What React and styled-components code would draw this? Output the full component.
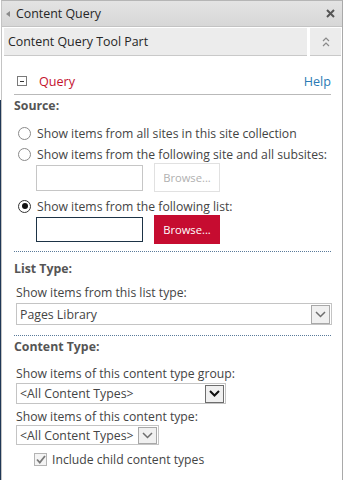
import React from "react";
import styled, { createGlobalStyle } from "styled-components";

const Global = createGlobalStyle`
  html, body { margin: 0; padding: 0; background: #fff; }
  body { font-family: "Open Sans", "Noto Sans", sans-serif; color: #444; }
  * { box-sizing: border-box; }
`;

const Page = styled.div`
  position: relative;
  width: 346px;
  height: 480px;
  overflow: hidden;
  background: #fff;
  white-space: nowrap;
  &::before {
    content: "";
    position: absolute;
    left: 0;
    top: 100px;
    bottom: 0;
    width: 1px;
    background: #1f3856;
  }
`;

const Panel = styled.div`
  margin-left: 1px;
  width: 342px;
  height: 480px;
  border-left: 1px solid #c4c4c4;
  border-right: 1px solid #a9a9a9;
  border-top: 1px solid #b5b5b5;
`;

const Header = styled.div`
  height: 26px;
  display: flex;
  align-items: center;
  padding: 0 7px 0 4px;
  background: linear-gradient(#e3e3e3, #d7d7d7);
  border-bottom: 1px solid #c3c3c3;
`;

const LeftTri = styled.span`
  width: 0;
  height: 0;
  border-top: 3.5px solid transparent;
  border-bottom: 3.5px solid transparent;
  border-right: 4px solid #8a8a8a;
  margin-right: 6px;
`;

const HeaderTitle = styled.span`
  flex: 1;
  font-size: 12.4px;
  color: #262626;
`;

const ToolRow = styled.div`
  display: flex;
  gap: 3px;
  margin-top: 1px;
  padding: 0 1px 0 2px;
`;

const ToolBar = styled.div`
  flex: 1;
  height: 28px;
  display: flex;
  align-items: center;
  padding-left: 4px;
  background: #ececec;
  border-bottom: 1px solid #c9c9c9;
  font-size: 12.4px;
  color: #262626;
`;

const ToolToggle = styled.div`
  width: 31px;
  height: 28px;
  display: flex;
  align-items: center;
  justify-content: center;
  background: #ececec;
  border-bottom: 1px solid #c9c9c9;
`;

const Body = styled.div`
  padding: 0 11px 0 12px;
`;

const QueryHead = styled.div`
  height: 25px;
  margin-top: 14px;
  display: flex;
  align-items: center;
  border-bottom: 1px solid #b9b9b9;
  padding: 0 0 2px 3px;
`;

const MinusBox = styled.span`
  width: 10px;
  height: 10px;
  border: 1px solid #7a7a7a;
  position: relative;
  margin-right: 12px;
  &::after {
    content: "";
    position: absolute;
    left: 2px;
    right: 2px;
    top: 3.5px;
    height: 1px;
    background: #333;
  }
`;

const QueryTitle = styled.span`
  flex: 1;
  font-size: 12.6px;
  color: #c4122f;
`;

const HelpLink = styled.span`
  font-size: 12.6px;
  color: #2a7ab5;
`;

const SectionTitle = styled.div`
  height: 20px;
  line-height: 20px;
  margin-top: ${(p) => p.$mt || 0}px;
  font-size: 12.3px;
  font-weight: 700;
  color: #555;
`;

const RadioRow = styled.label`
  display: flex;
  align-items: center;
  height: 18px;
  margin-top: ${(p) => p.$mt || 0}px;
  padding-left: 4px;
  font-size: 12.2px;
  color: #444;
`;

const Radio = styled.span`
  width: 13px;
  height: 13px;
  border-radius: 50%;
  border: 1px solid ${(p) => (p.$checked ? "#333" : "#8a8a8a")};
  background: #fff;
  margin-right: 6px;
  display: flex;
  align-items: center;
  justify-content: center;
  flex-shrink: 0;
  &::after {
    content: "";
    width: 6px;
    height: 6px;
    border-radius: 50%;
    background: #111;
    display: ${(p) => (p.$checked ? "block" : "none")};
  }
`;

const InputRow = styled.div`
  display: flex;
  align-items: center;
  gap: 11px;
  height: 29px;
  padding-left: 22px;
`;

const TextBox = styled.div`
  width: 107px;
  height: ${(p) => (p.$active ? 25 : 26)}px;
  border: 1px solid ${(p) => (p.$active ? "#1d3346" : "#c6c6c6")};
  background: #fff;
`;

const Button = styled.div`
  width: 66px;
  height: 29px;
  display: flex;
  align-items: center;
  justify-content: center;
  font-size: 11.2px;
  ${(p) =>
    p.$primary
      ? `background: #c60c30; color: #fff; border: 1px solid #c60c30;`
      : `background: #fff; color: #b0b0b0; border: 1px solid #e1e1e1;`}
`;

const Dotted = styled.div`
  margin-top: ${(p) => p.$mt || 0}px;
  border-top: 1px dotted #5a7a9a;
`;

const FieldLabel = styled.div`
  height: 16px;
  line-height: 16px;
  margin-top: ${(p) => p.$mt || 0}px;
  padding-left: 2px;
  font-size: 12.2px;
  color: #444;
`;

const Select = styled.div`
  width: ${(p) => p.$w}px;
  height: ${(p) => p.$h || 21}px;
  margin-top: ${(p) => p.$mt || 0}px;
  margin-left: 2px;
  border: 1px solid #c4c4c4;
  display: flex;
  align-items: center;
  justify-content: space-between;
  padding: 0 1px 0 3px;
  font-size: 12.3px;
  color: #444;
  background: #fff;
`;

const Arrow = styled.span`
  width: 19px;
  height: ${(p) => p.$h || 19}px;
  border: 1px solid ${(p) => (p.$dark ? "#6d6d6d" : "#a8a8a8")};
  background: #f0f0f0;
  display: flex;
  align-items: center;
  justify-content: center;
`;

const CheckRow = styled.div`
  display: flex;
  align-items: center;
  height: 16px;
  margin-top: ${(p) => p.$mt || 0}px;
  padding-left: 20px;
  font-size: 12.2px;
  color: #444;
`;

const CheckBox = styled.span`
  width: 13px;
  height: 13px;
  border: 1px solid #b4b4b4;
  background: #f4f4f4;
  margin-right: 5px;
  display: flex;
  align-items: center;
  justify-content: center;
`;

const Chevron = ({ dark }) => (
  <svg width="11" height="7" viewBox="0 0 11 7">
    <path d="M1 1 L5.5 5.5 L10 1" fill="none" stroke={dark ? "#111" : "#6e6e6e"} strokeWidth={dark ? 2 : 1.5} />
  </svg>
);

export default function App() {
  return (
    <Page>
      <Global />
      <Panel>
        <Header>
          <LeftTri />
          <HeaderTitle>Content Query</HeaderTitle>
          <svg width="9" height="9" viewBox="0 0 9 9">
            <path d="M1 1 L8 8 M8 1 L1 8" stroke="#555" strokeWidth="2" />
          </svg>
        </Header>
        <ToolRow>
          <ToolBar>Content Query Tool Part</ToolBar>
          <ToolToggle>
            <svg width="8" height="10" viewBox="0 0 8 10">
              <path d="M1 4 L4 1 L7 4 M1 9 L4 6 L7 9" fill="none" stroke="#8a8a8a" strokeWidth="1.2" />
            </svg>
          </ToolToggle>
        </ToolRow>
        <Body>
          <QueryHead>
            <MinusBox />
            <QueryTitle>Query</QueryTitle>
            <HelpLink>Help</HelpLink>
          </QueryHead>
          <SectionTitle $mt={1}>Source:</SectionTitle>
          <RadioRow $mt={8}>
            <Radio />
            Show items from all sites in this site collection
          </RadioRow>
          <RadioRow $mt={3}>
            <Radio />
            Show items from the following site and all subsites:
          </RadioRow>
          <InputRow>
            <TextBox />
            <Button>Browse...</Button>
          </InputRow>
          <RadioRow $mt={5}>
            <Radio $checked />
            Show items from the following list:
          </RadioRow>
          <InputRow>
            <TextBox $active />
            <Button $primary>Browse...</Button>
          </InputRow>
          <Dotted $mt={7} />
          <SectionTitle $mt={7}>List Type:</SectionTitle>
          <FieldLabel $mt={6}>Show items from this list type:</FieldLabel>
          <Select $w={316} $h={22} $mt={2}>
            Pages Library
            <Arrow><Chevron /></Arrow>
          </Select>
          <Dotted $mt={10} />
          <SectionTitle $mt={1}>Content Type:</SectionTitle>
          <FieldLabel $mt={9}>Show items of this content type group:</FieldLabel>
          <Select $w={210} $mt={1}>
            &lt;All Content Types&gt;
            <Arrow $dark $h={18}><Chevron dark /></Arrow>
          </Select>
          <FieldLabel $mt={5}>Show items of this content type:</FieldLabel>
          <Select $w={143} $h={20}>
            &lt;All Content Types&gt;
            <Arrow $h={17}><Chevron /></Arrow>
          </Select>
          <CheckRow $mt={6}>
            <CheckBox>
              <svg width="10" height="9" viewBox="0 0 10 9">
                <path d="M1 4.5 L3.8 7.5 L9 1" fill="none" stroke="#7a7a7a" strokeWidth="1.8" />
              </svg>
            </CheckBox>
            Include child content types
          </CheckRow>
        </Body>
      </Panel>
    </Page>
  );
}
